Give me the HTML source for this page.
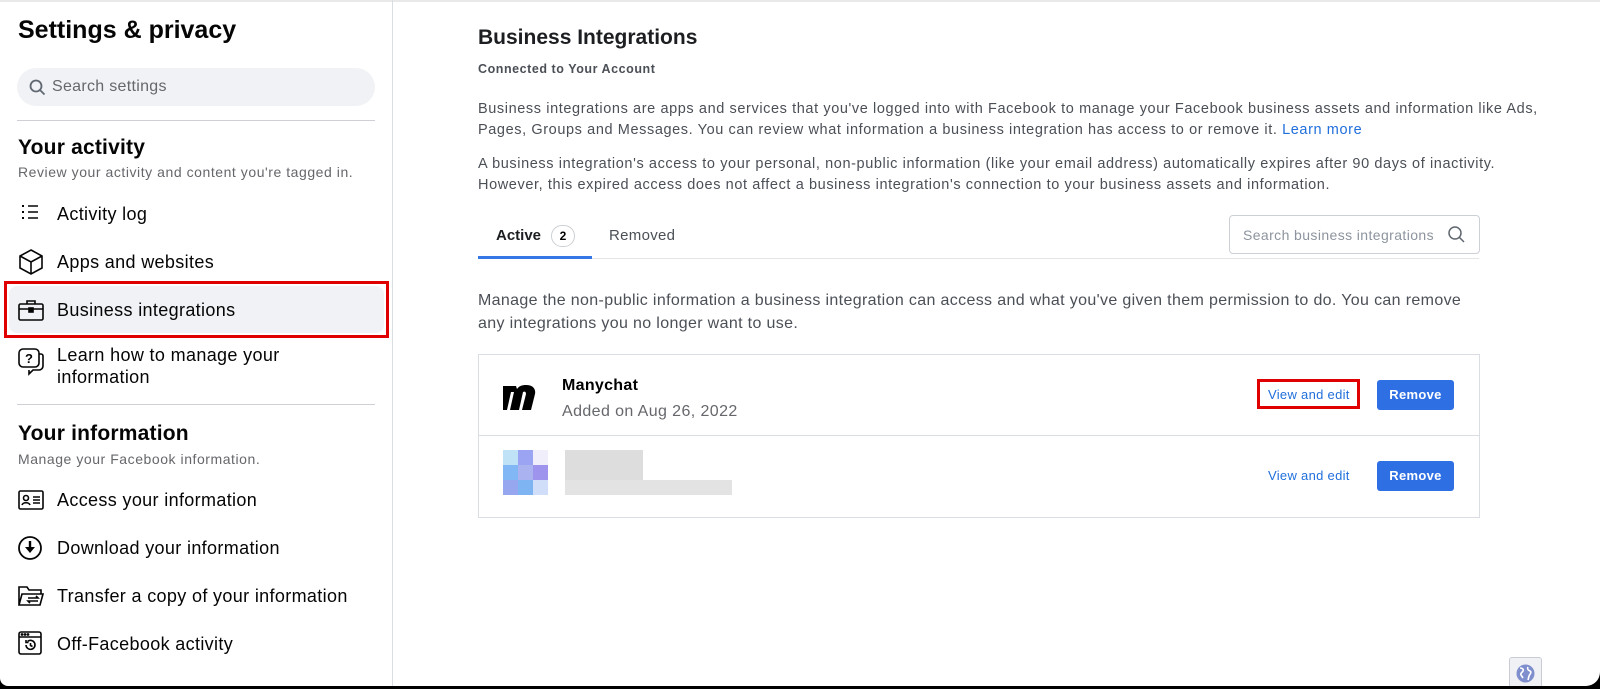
<!DOCTYPE html>
<html><head><meta charset="utf-8"><style>
*{box-sizing:border-box;margin:0;padding:0}
body{width:1600px;height:689px;background:#000;font-family:"Liberation Sans",sans-serif;overflow:hidden;position:relative}
.page{position:absolute;left:0;top:0;width:1600px;height:686px;background:#fff;border-radius:0 0 14px 8px;overflow:hidden}
.side{position:absolute;left:0;top:0;width:393px;height:686px;border-right:1px solid #dadde1}
.t{position:absolute;white-space:nowrap}
.h1{left:18px;top:16px;font-size:25px;font-weight:bold;color:#050505}
.search{position:absolute;left:17px;top:68px;width:358px;height:38px;border-radius:19px;background:#f0f2f5}
.search span{position:absolute;left:35px;top:10px;font-size:16px;color:#65676b;letter-spacing:.3px}
.hr{position:absolute;left:17px;width:358px;height:1px;background:#ced0d4}
.sec{left:18px;font-size:21px;font-weight:bold;color:#050505;letter-spacing:.2px}
.sub{left:18px;font-size:14px;color:#65676b;letter-spacing:.55px}
.item{left:57px;font-size:18px;color:#050505;letter-spacing:.35px}
.ic{position:absolute;left:17px}
.main .t{color:#1c1e21}
.btn{position:absolute;width:77px;height:30px;background:#2f6fe4;border-radius:3px;color:#fff;font-weight:bold;font-size:13px;text-align:center;line-height:30px;letter-spacing:.3px}
.ve{position:absolute;font-size:13px;color:#216fdb;letter-spacing:.3px}
</style></head><body><div class="page">
<div style="position:absolute;left:0;top:0;width:1600px;height:2px;background:#e9e9e9"></div>
<div class="side">
<div class="t h1">Settings &amp; privacy</div>
<div class="search"><svg style="position:absolute;left:12px;top:11px" width="17" height="17" viewBox="0 0 17 17"><circle cx="7" cy="7" r="5.5" fill="none" stroke="#606770" stroke-width="1.8"/><path d="M11 11l4.5 4.5" stroke="#606770" stroke-width="1.8"/></svg><span>Search settings</span></div>
<div class="hr" style="top:120px"></div>
<div class="t sec" style="top:136px">Your activity</div>
<div class="t sub" style="top:164px">Review your activity and content you're tagged in.</div>
<svg class="ic" style="top:203px" width="24" height="20" viewBox="0 0 24 20"><g fill="#050505"><rect x="5" y="2" width="2" height="2"/><rect x="5" y="8" width="2" height="2"/><rect x="5" y="14" width="2" height="2"/></g><g stroke="#050505" stroke-width="1.5"><path d="M11 3h10M11 9h10M11 15h10"/></g></svg>
<div class="t item" style="top:204px">Activity log</div>
<svg class="ic" style="top:248px" width="28" height="28" viewBox="0 0 28 28" fill="none" stroke="#050505" stroke-width="1.6"><path d="M14 2l11 6v12l-11 6-11-6V8z M3 8l11 6 11-6 M14 14v12"/></svg>
<div class="t item" style="top:252px">Apps and websites</div>
<div style="position:absolute;left:4px;top:281px;width:385px;height:57px;border:3px solid #e00000"></div>
<div style="position:absolute;left:9px;top:286px;width:375px;height:47px;background:#f0f2f5;border-radius:8px"></div>
<svg class="ic" style="top:298px" width="28" height="24" viewBox="0 0 28 24" fill="none" stroke="#050505" stroke-width="1.6"><rect x="2" y="6" width="24" height="16" rx="1.5"/><path d="M10 6V3h8v3 M2 11h24"/><rect x="12" y="10" width="4" height="4" fill="#050505"/></svg>
<div class="t item" style="top:300px">Business integrations</div>
<svg class="ic" style="top:346px" width="28" height="30" viewBox="0 0 28 30" fill="none" stroke="#050505" stroke-width="1.6"><rect x="2" y="3" width="20" height="18" rx="4"/><path d="M22 8h2a2 2 0 012 2v10a4 4 0 01-4 4h-6l-4 4v-4"/><text x="8" y="17" font-size="13" font-weight="bold" fill="#050505" stroke="none" font-family="Liberation Sans">?</text></svg>
<div class="t item" style="top:344px;line-height:22px">Learn how to manage your<br>information</div>
<div class="hr" style="top:404px"></div>
<div class="t sec" style="top:422px">Your information</div>
<div class="t sub" style="top:451px">Manage your Facebook information.</div>
<svg class="ic" style="top:489px" width="28" height="22" viewBox="0 0 28 22" fill="none" stroke="#050505" stroke-width="1.6"><rect x="2" y="2" width="24" height="18" rx="1.5"/><circle cx="9" cy="9" r="2.5"/><path d="M5 16c1-3 7-3 8 0 M16 8h7M16 11h7M16 14h7"/></svg>
<div class="t item" style="top:490px">Access your information</div>
<svg class="ic" style="top:535px" width="26" height="26" viewBox="0 0 26 26"><circle cx="13" cy="13" r="11" fill="none" stroke="#050505" stroke-width="1.8"/><path d="M13 6v8" stroke="#050505" stroke-width="2.4"/><path d="M8 12l5 6 5-6z" fill="#050505"/></svg>
<div class="t item" style="top:538px">Download your information</div>
<svg class="ic" style="top:583px" width="28" height="26" viewBox="0 0 28 26" fill="none" stroke="#050505" stroke-width="1.6"><path d="M2 22V4h8l2 3h12v4 M2 22l3-11h21l-3 11z"/><path d="M11 15h10l-2-2 M21 18H11l2 2"/></svg>
<div class="t item" style="top:586px">Transfer a copy of your information</div>
<svg class="ic" style="top:630px" width="26" height="26" viewBox="0 0 26 26" fill="none" stroke="#050505" stroke-width="1.6"><rect x="2" y="2" width="22" height="22" rx="2"/><path d="M2 7h22"/><circle cx="5" cy="4.5" r=".6" fill="#050505"/><circle cx="8" cy="4.5" r=".6" fill="#050505"/><circle cx="11" cy="4.5" r=".6" fill="#050505"/><path d="M9 15a4.5 4.5 0 1 0 1.5-3.5 M9 10v2.5h2.5 M13.5 13v2.5l2 1"/></svg>
<div class="t item" style="top:634px">Off-Facebook activity</div>
</div>
<div class="main">
<div class="t" style="left:478px;top:26px;font-size:21px;font-weight:bold">Business Integrations</div>
<div class="t" style="left:478px;top:62px;font-size:12.5px;font-weight:bold;color:#4b4f56;letter-spacing:.55px">Connected to Your Account</div>
<div class="t" style="left:478px;top:99px;font-size:14.5px;line-height:21px;color:#4b4f56;letter-spacing:.6px">Business integrations are apps and services that you've logged into with Facebook to manage your Facebook business assets and information like Ads,<br>Pages, Groups and Messages. You can review what information a business integration has access to or remove it. <span style="color:#216fdb">Learn more</span></div>
<div class="t" style="left:478px;top:154px;font-size:14.5px;line-height:21px;color:#4b4f56;letter-spacing:.6px">A business integration's access to your personal, non-public information (like your email address) automatically expires after 90 days of inactivity.<br>However, this expired access does not affect a business integration's connection to your business assets and information.</div>
<div class="t" style="left:496px;top:227px;font-size:15px;font-weight:bold">Active</div>
<div style="position:absolute;left:551px;top:225px;width:24px;height:22px;border:1px solid #ccd0d5;border-radius:11px;font-size:12px;font-weight:bold;text-align:center;line-height:20px">2</div>
<div class="t" style="left:609px;top:227px;font-size:15px;color:#4b4f56;letter-spacing:.3px">Removed</div>
<div style="position:absolute;left:478px;top:258px;width:1001px;height:1px;background:#e5e5e5"></div>
<div style="position:absolute;left:478px;top:256px;width:114px;height:3px;background:#3578e5"></div>
<div style="position:absolute;left:1229px;top:215px;width:251px;height:39px;border:1px solid #ccd0d5;border-radius:4px"><span style="position:absolute;left:13px;top:11px;font-size:14px;color:#8d949e;letter-spacing:.4px">Search business integrations</span><svg style="position:absolute;left:217px;top:9px" width="19" height="19" viewBox="0 0 19 19"><circle cx="8" cy="8" r="6" fill="none" stroke="#606770" stroke-width="1.5"/><path d="M12.5 12.5l4.5 4.5" stroke="#606770" stroke-width="1.5"/></svg></div>
<div class="t" style="left:478px;top:289px;font-size:16px;line-height:23px;color:#4b4f56;letter-spacing:.35px">Manage the non-public information a business integration can access and what you've given them permission to do. You can remove<br>any integrations you no longer want to use.</div>
<div style="position:absolute;left:478px;top:354px;width:1002px;height:164px;border:1px solid #dadde1"></div>
<div style="position:absolute;left:479px;top:435px;width:1000px;height:1px;background:#dadde1"></div>
<svg style="position:absolute;left:503px;top:384px" width="35" height="26" viewBox="0 0 35 26"><path d="M0 2h13l1 3c2-3 5-4 9-4 7 0 10 4 9 9l-4 16h-9l4-16c0-2-1-3-3-2l-4 18h-9l4-18H8L4 26H0z" fill="#000"/></svg>
<div class="t" style="left:562px;top:377px;font-size:16px;font-weight:bold;color:#000;letter-spacing:.3px">Manychat</div>
<div class="t" style="left:562px;top:403px;font-size:16px;color:#65676b;letter-spacing:.4px">Added on Aug 26, 2022</div>
<div style="position:absolute;left:1257px;top:379px;width:103px;height:30px;border:3px solid #e00000"></div>
<div class="ve" style="left:1268px;top:387px">View and edit</div>
<div class="btn" style="left:1377px;top:380px">Remove</div>
<div style="position:absolute;left:503px;top:450px;display:grid;grid-template-columns:repeat(3,15px);grid-template-rows:repeat(3,15px)">
<div style="background:#c0e2f6"></div><div style="background:#9aa4f2"></div><div style="background:#f0eefa"></div>
<div style="background:#82b7f5"></div><div style="background:#aab3ef"></div><div style="background:#9e94ee"></div>
<div style="background:#97a7ef"></div><div style="background:#7fb4f2"></div><div style="background:#d0defa"></div></div>
<div style="position:absolute;left:565px;top:450px;width:78px;height:30px;background:#dddddd"></div>
<div style="position:absolute;left:565px;top:480px;width:167px;height:15px;background:#e3e3e3"></div>
<div class="ve" style="left:1268px;top:468px">View and edit</div>
<div class="btn" style="left:1377px;top:461px">Remove</div>
<div style="position:absolute;left:1509px;top:657px;width:33px;height:32px;border:1px solid #c9ccd6;border-radius:3px;background:#f0f1f4"><svg style="position:absolute;left:6px;top:6px" width="19" height="19" viewBox="0 0 19 19"><circle cx="9.5" cy="9.5" r="9" fill="#7f8fce"/><path d="M4 4c2 0 4 1 3 3s-3 2-2 4l2 3 M12 3c-1 2 0 3 2 4s0 3-1 5l-1 4" stroke="#fff" stroke-width="1.6" fill="none"/></svg></div>
</div>
</div></body></html>
